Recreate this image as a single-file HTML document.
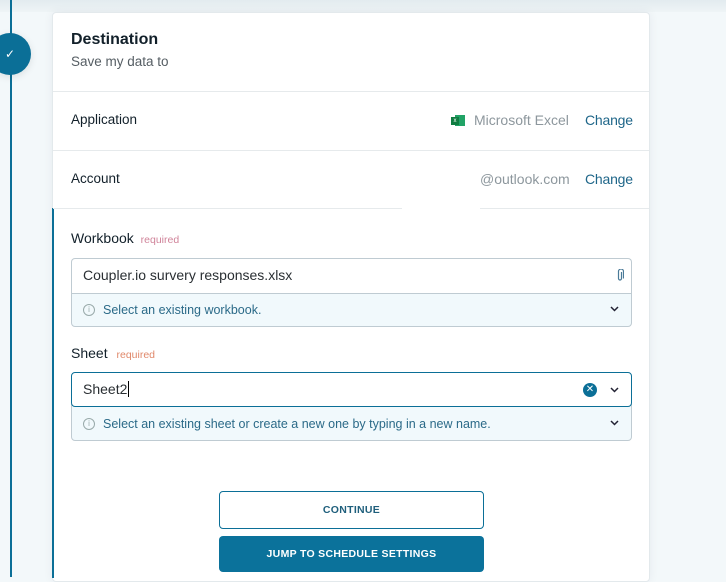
<!DOCTYPE html><html><head><style>
body{margin:0;width:726px;height:577px;overflow:hidden;background:#f3f8fa;font-family:"Liberation Sans",sans-serif;position:relative}
.top{position:absolute;left:0;top:0;width:726px;height:12px;background:linear-gradient(#e2ebef,#eef4f6)}
.vl{position:absolute;left:10px;top:0;width:2px;height:577px;background:#0b6f97}
.circ{position:absolute;left:-11px;top:33px;width:42px;height:42px;border-radius:50%;background:#0b6f97;color:#fff;font-size:12px;text-align:center;line-height:42px;box-shadow:0 2px 8px rgba(0,0,0,.1)}
.card{position:absolute;left:52px;top:12px;width:598px;height:570px;background:#fff;border:1px solid #e3e9ec;border-radius:4px;box-sizing:border-box;box-shadow:0 0 10px rgba(0,40,60,.06)}
.lb{position:absolute;left:52px;top:208px;width:2px;height:370px;background:#0b6f97}
.t{position:absolute;white-space:nowrap}
.hr{position:absolute;height:1px;background:#e6eaec}
.box{position:absolute;left:71px;width:561px;box-sizing:border-box;border:1px solid #bfcbd2}
.inp{height:35px;background:#fff;font-size:14px;color:#2a2f33;padding-left:11px;line-height:33px;border-radius:4px 4px 0 0}
.hint{background:#f1f9fc;font-size:12.5px;color:#2b6a88;line-height:32px;padding-left:31px;border-radius:0 0 4px 4px}
.i{position:absolute;left:11px;top:10px;width:10px;height:10px;border:1px solid #9aa;border-radius:50%;font-size:8px;line-height:10px;text-align:center;color:#9aa}
.chev{position:absolute;right:12px;top:12px}
.btn{position:absolute;left:219px;width:265px;border-radius:4px;box-sizing:border-box;text-align:center;font-weight:bold;font-size:10.5px;letter-spacing:.3px}
</style></head><body>
<div class="top"></div>
<div class="vl"></div>
<div class="circ">✓</div>
<div class="card"></div>
<div class="lb"></div>
<div class="t" style="left:71px;top:31px;font-size:16px;font-weight:bold;color:#12202a">Destination</div>
<div class="t" style="left:71px;top:54px;font-size:13.5px;color:#555d63">Save my data to</div>
<div class="hr" style="left:53px;top:91px;width:596px"></div>
<div class="t" style="left:71px;top:112px;font-size:13.5px;color:#12202a">Application</div>
<div class="t" style="left:451px;top:115px;width:14px;height:11px;"><span style="position:absolute;left:4px;top:0;width:10px;height:11px;background:#21a366"></span><span style="position:absolute;left:0;top:2px;width:8px;height:8px;background:#107c41;color:#fff;font-size:6px;line-height:8px;text-align:center">x</span></div>
<div class="t" style="left:474px;top:112px;font-size:14px;color:#8d979d">Microsoft Excel</div>
<div class="t" style="left:585px;top:112px;font-size:14px;color:#1f6689;letter-spacing:-.2px">Change</div>
<div class="hr" style="left:53px;top:150px;width:596px"></div>
<div class="t" style="left:71px;top:171px;font-size:13.5px;color:#12202a">Account</div>
<div class="t" style="left:480px;top:171px;font-size:14px;color:#8d979d">@outlook.com</div>
<div class="t" style="left:585px;top:171px;font-size:14px;color:#1f6689;letter-spacing:-.2px">Change</div>
<div class="hr" style="left:53px;top:208px;width:349px"></div>
<div class="hr" style="left:480px;top:208px;width:169px"></div>
<div class="t" style="left:71px;top:230px;font-size:14px;color:#12202a">Workbook <span style="font-size:10.5px;color:#d0849a;margin-left:3px">required</span></div>
<div class="box inp" style="top:258px;border-bottom:none">Coupler.io survery responses.xlsx<svg style="position:absolute;right:7px;top:10px" width="8" height="13" viewBox="0 0 8 13"><path d="M5.5 3v6.5a1.5 1.5 0 0 1-3 0V2.5a2.5 2.5 0 0 1 5 0v7" fill="none" stroke="#4a7a98" stroke-width="1.2"/></svg></div>
<div class="box hint" style="top:293px;height:34px"><span class="i">i</span>Select an existing workbook.<svg class="chev" width="9" height="6" viewBox="0 0 9 6"><path d="M1 1l3.5 3.5L8 1" fill="none" stroke="#223" stroke-width="1.5"/></svg></div>
<div class="t" style="left:71px;top:345px;font-size:14px;color:#12202a">Sheet <span style="font-size:10.5px;color:#e0886a;margin-left:5px">required</span></div>
<div class="box hint" style="top:404px;height:37px;padding-top:3px"><span class="i" style="top:13px">i</span>Select an existing sheet or create a new one by typing in a new name.<svg class="chev" style="top:15px" width="9" height="6" viewBox="0 0 9 6"><path d="M1 1l3.5 3.5L8 1" fill="none" stroke="#223" stroke-width="1.5"/></svg></div>
<div class="box inp" style="top:372px;border-color:#0b6f97;border-radius:4px">Sheet2<span style="border-left:1px solid #000;margin-left:1px"></span><span style="position:absolute;right:34px;top:10px;width:14px;height:14px;border-radius:50%;background:#0b6f97;color:#fff;font-size:10px;line-height:14px;text-align:center">✕</span><svg class="chev" style="top:14px" width="9" height="6" viewBox="0 0 9 6"><path d="M1 1l3.5 3.5L8 1" fill="none" stroke="#223" stroke-width="1.5"/></svg></div>
<div class="btn" style="top:491px;height:38px;border:1px solid #0b6f97;color:#1f5f7c;line-height:36px">CONTINUE</div>
<div class="btn" style="top:536px;height:36px;background:#0b729b;color:#fff;line-height:36px">JUMP TO SCHEDULE SETTINGS</div>
</body></html>
